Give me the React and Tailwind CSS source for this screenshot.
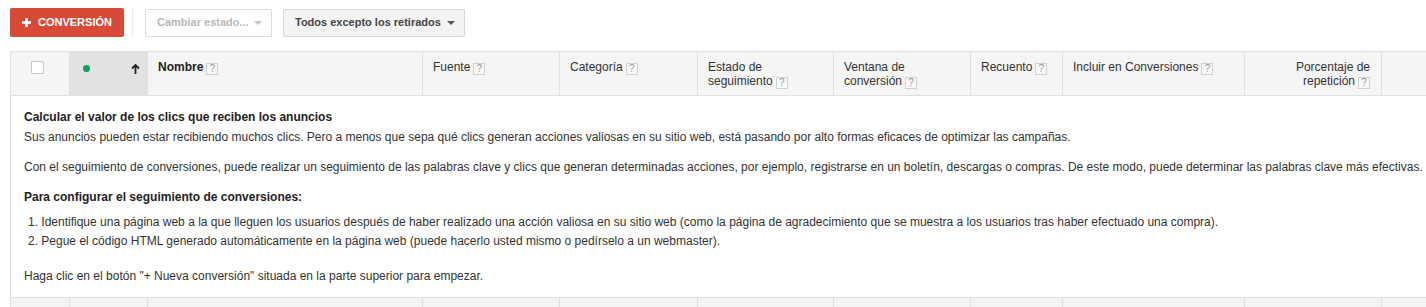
import React from 'react';

const font = { fontFamily: '"Liberation Sans", Arial, sans-serif' };

function Help() {
  return (
    <span className="ml-[3px] inline-flex h-[12px] w-[12px] items-center justify-center border border-[#d0d0d0] bg-[#f8f8f8] align-[-1px] text-[10px] leading-none font-normal text-[#999]">
      ?
    </span>
  );
}

const columns = [
  { w: 'w-[275px]', lines: ['Nombre'], bold: true },
  { w: 'w-[137px]', lines: ['Fuente'] },
  { w: 'w-[138px]', lines: ['Categoría'] },
  { w: 'w-[136px]', lines: ['Estado de', 'seguimiento'] },
  { w: 'w-[137px]', lines: ['Ventana de', 'conversión'] },
  { w: 'w-[92px]', lines: ['Recuento'] },
  { w: 'w-[182px]', lines: ['Incluir en Conversiones'] },
  { w: 'w-[137px]', lines: ['Porcentaje de', 'repetición'], right: true },
  { w: 'w-[160px]', lines: ['Valor de la', 'conversión'], right: true, noHelp: true, pad: 'pr-[44px]' },
];

function HeaderCell({ col }) {
  return (
    <div
      className={`${col.w} shrink-0 border-r border-[#e0e0e0] pt-[8px] ${col.right ? 'text-right ' + (col.pad || 'pr-[11px]') : 'pl-[10px]'} text-[12px] leading-[14px] ${col.bold ? 'font-bold text-[#222]' : 'text-[#333]'}`}
    >
      {col.lines.map((l, i) => (
        <div key={i}>
          {l}
          {i === col.lines.length - 1 && !col.noHelp && <Help />}
        </div>
      ))}
    </div>
  );
}

export default function App() {
  return (
    <div className="h-[307px] w-[1426px] overflow-hidden bg-white" style={font}>
      {/* toolbar */}
      <div className="flex items-center pl-[10px] pt-[8px]">
        <button className="flex h-[29px] w-[114px] items-center rounded-[2px] bg-[#d84a38] pl-[12px] text-[11px] font-bold text-white">
          <svg width="9" height="9" viewBox="0 0 9 9" className="mr-[7px]">
            <rect x="3.2" y="0" width="2.6" height="9" fill="white" />
            <rect x="0" y="3.2" width="9" height="2.6" fill="white" />
          </svg>
          CONVERSIÓN
        </button>
        <div className="ml-[8px] h-[29px] w-px bg-[#ebebeb]" />
        <button className="ml-[12px] flex h-[28px] w-[127px] items-center rounded-[2px] border border-[#dcdcdc] bg-white pl-[11px] text-[11px] font-bold text-[#b8b8b8]">
          Cambiar estado...
          <span className="ml-[5px] h-0 w-0 border-x-[4px] border-t-[4px] border-x-transparent border-t-[#c4c4c4]" />
        </button>
        <button className="ml-[11px] flex h-[28px] w-[182px] items-center rounded-[2px] border border-[#d6d6d6] bg-[#f3f3f3] pl-[11px] text-[11px] font-bold text-[#444]">
          Todos excepto los retirados
          <span className="ml-[6px] h-0 w-0 border-x-[4px] border-t-[4px] border-x-transparent border-t-[#555]" />
        </button>
      </div>

      {/* table */}
      <div className="ml-[10px] mt-[14px] w-[1600px] border-l border-t border-[#e0e0e0]">
        <div className="flex h-[44px] border-b border-[#e0e0e0] bg-[#f5f5f5]">
          <div className="flex w-[59px] shrink-0 border-r border-[#e0e0e0] pl-[20px] pt-[9px]">
            <span className="h-[13px] w-[13px] rounded-[1px] border border-[#c6c6c6] bg-white" />
          </div>
          <div className="flex w-[78px] shrink-0 items-start justify-between border-r border-[#e0e0e0] bg-[#e2e2e2] pl-[13px] pr-[7px] pt-[12px]">
            <span className="mt-px h-[7px] w-[7px] rounded-full bg-[#0f9d58]" />
            <svg width="9" height="10" viewBox="0 0 9 10">
              <path d="M4.5 1 L4.5 10 M1 4.5 L4.5 1 L8 4.5" stroke="#222" strokeWidth="1.8" fill="none" />
            </svg>
          </div>
          {columns.map((c, i) => (
            <HeaderCell key={i} col={c} />
          ))}
        </div>

        <div className="h-[201px] pl-[13px] pt-[12px] text-[12px] leading-[19px] text-[#333]">
          <div className="mb-px font-bold text-[#222]">Calcular el valor de los clics que reciben los anuncios</div>
          <p>
            Sus anuncios pueden estar recibiendo muchos clics. Pero a menos que sepa qué clics generan acciones valiosas en su sitio web, está pasando por alto formas eficaces de optimizar las campañas.
          </p>
          <p className="mt-[11px]">
            Con el seguimiento de conversiones, puede realizar un seguimiento de las palabras clave y clics que generan determinadas acciones, por ejemplo, registrarse en un boletín, descargas o compras. De este modo, puede determinar las palabras clave más efectivas.
          </p>
          <div className="mt-[11px] font-bold text-[#222]">Para configurar el seguimiento de conversiones:</div>
          <ol className="mt-[6px] pl-[4px]">
            <li>
              1. Identifique una página web a la que lleguen los usuarios después de haber realizado una acción valiosa en su sitio web (como la página de agradecimiento que se muestra a los usuarios tras haber efectuado una compra).
            </li>
            <li>
              2. Pegue el código HTML generado automáticamente en la página web (puede hacerlo usted mismo o pedírselo a un webmaster).
            </li>
          </ol>
          <p className="mt-[16px]">Haga clic en el botón "+ Nueva conversión" situada en la parte superior para empezar.</p>
        </div>

        <div className="flex h-[20px] border-t border-[#e0e0e0] bg-[#f4f4f4]">
          <div className="w-[59px] shrink-0 border-r border-[#e0e0e0]" />
          <div className="w-[78px] shrink-0 border-r border-[#e0e0e0]" />
          {columns.map((c, i) => (
            <div key={i} className={`${c.w} shrink-0 border-r border-[#e0e0e0]`} />
          ))}
        </div>
      </div>
    </div>
  );
}
